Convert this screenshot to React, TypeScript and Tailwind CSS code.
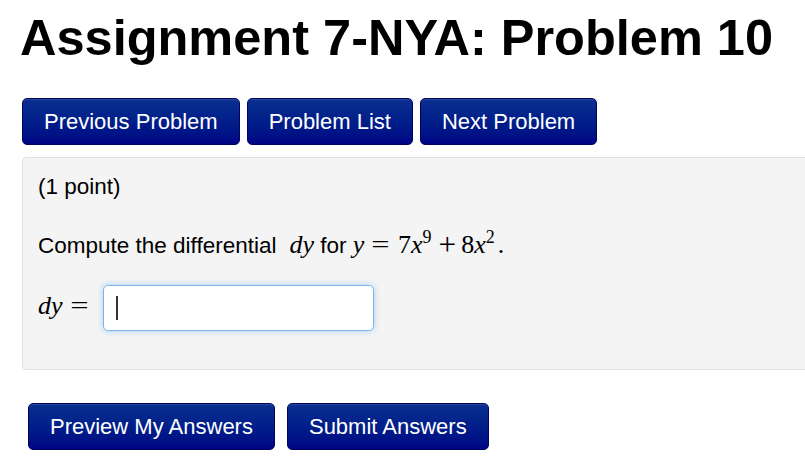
import React from "react"

const btn =
  "h-[47px] px-[21px] rounded-[5px] border border-[#00045f] bg-gradient-to-b from-[#0b2f8f] to-[#000384] text-white text-[22px] leading-none font-['Liberation_Sans',Arial,sans-serif] shadow-[inset_0_1px_0_rgba(255,255,255,0.12)]"

const serif = "font-['Liberation_Serif','Times_New_Roman',serif]"

function MathVar({ children }: { children: React.ReactNode }) {
  return <span className="italic">{children}</span>
}

// MathJax draws = and + wider than Times does
function Op({ children, className = "" }: { children: React.ReactNode; className?: string }) {
  return <span className={`inline-block ${className}`}>{children}</span>
}

export default function App() {
  return (
    <div className="w-[805px] h-[470px] overflow-hidden bg-white text-black font-['Liberation_Sans',Arial,sans-serif]">
      {/* Title */}
      <h1 className="mt-[13px] pl-[20px] text-[50.5px] leading-[50px] font-bold whitespace-nowrap">
        Assignment 7-NYA: Problem 10
      </h1>

      {/* Nav buttons */}
      <div className="mt-[35px] ml-[22px] flex gap-[7px]">
        <button className={btn}>Previous Problem</button>
        <button className={btn}>Problem List</button>
        <button className={btn}>Next Problem</button>
      </div>

      {/* Problem panel */}
      <div className="mt-[12px] ml-[22px] w-[820px] h-[213px] rounded-[4px] border border-[#e1e1e1] bg-[#f4f4f4] pl-[15px] pt-[16px]">
        <p className="text-[22.5px] leading-[26px]">(1 point)</p>
        <p className="mt-[32px] text-[22.5px] leading-[26px] whitespace-nowrap">
          Compute the differential
          <span className={`${serif} text-[26px] ml-[13px]`}>
            <MathVar>dy</MathVar>
          </span>{" "}
          for{" "}
          <span className={`${serif} text-[26px]`}>
            <MathVar>y</MathVar>
            <Op className="scale-x-[1.25] ml-[9px] mr-[10px]">=</Op>
            7<MathVar>x</MathVar>
            <sup className="text-[18px] -top-[10px]">9</sup>
            <Op className="scale-[1.2] ml-[8px] mr-[7px]">+</Op>
            8<MathVar>x</MathVar>
            <sup className="text-[18px] -top-[10px]">2</sup>
            <span className="ml-[3px]">.</span>
          </span>
        </p>
        <div className="mt-[26px] flex items-center">
          <span className={`${serif} text-[26px] leading-[26px] mb-[4px]`}>
            <MathVar>dy</MathVar>
            <Op className="scale-x-[1.25] ml-[9px]">=</Op>
          </span>
          <div className="ml-[17px] w-[271px] h-[46px] rounded-[5px] border border-[#7db5ea] bg-white shadow-[0_0_6px_rgba(102,175,233,0.55)] flex items-center pl-[12px]">
            <div className="w-[1.5px] h-[24px] bg-[#333]" />
          </div>
        </div>
      </div>

      {/* Submit buttons */}
      <div className="mt-[33px] ml-[28px] flex gap-[12px]">
        <button className={btn}>Preview My Answers</button>
        <button className={btn}>Submit Answers</button>
      </div>
    </div>
  )
}
